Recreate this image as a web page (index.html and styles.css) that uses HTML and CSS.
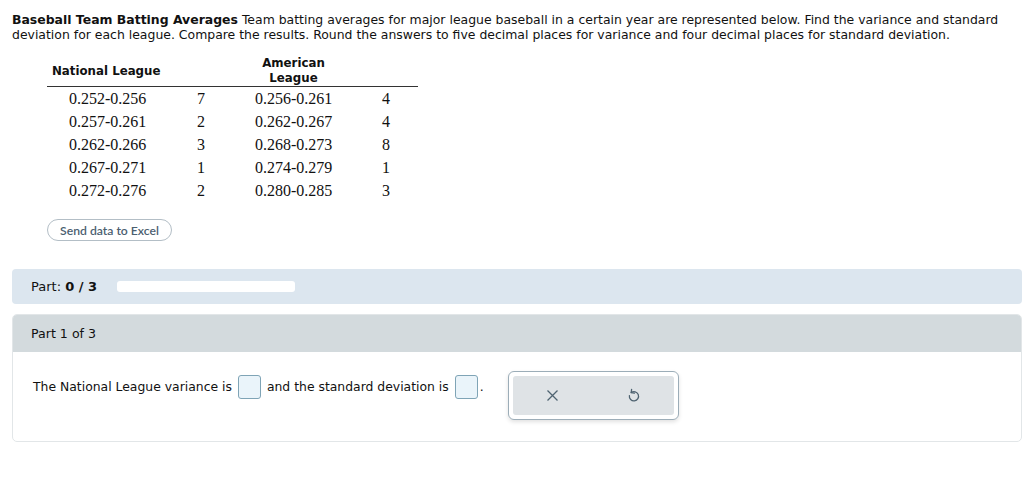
FILE: index.html
```html
<!DOCTYPE html>
<html>
<head>
<meta charset="utf-8">
<link rel="stylesheet" href="styles.css">
</head>
<body>
<div class="page">
  <p class="intro"><b>Baseball Team Batting Averages</b> Team batting averages for major league baseball in a certain year are represented below. Find the variance and standard deviation for each league. Compare the results. Round the answers to five decimal places for variance and four decimal places for standard deviation.</p>

  <div class="data">
    <div class="hdr hdr-nl">National League</div>
    <div class="hdr"></div>
    <div class="hdr hdr-al">American<br>League</div>
    <div class="hdr"></div>
    <div class="hdr"></div>

    <div class="c1">0.252-0.256</div><div class="cn">7</div><div class="c3">0.256-0.261</div><div class="cn">4</div><div></div>
    <div class="c1">0.257-0.261</div><div class="cn">2</div><div class="c3">0.262-0.267</div><div class="cn">4</div><div></div>
    <div class="c1">0.262-0.266</div><div class="cn">3</div><div class="c3">0.268-0.273</div><div class="cn">8</div><div></div>
    <div class="c1">0.267-0.271</div><div class="cn">1</div><div class="c3">0.274-0.279</div><div class="cn">1</div><div></div>
    <div class="c1">0.272-0.276</div><div class="cn">2</div><div class="c3">0.280-0.285</div><div class="cn">3</div><div></div>
  </div>

  <button class="excel">Send data to Excel</button>

  <div class="partbar">
    <span class="partlabel">Part: <b>0 / 3</b></span>
    <span class="progress"></span>
  </div>

  <div class="card">
    <div class="card-head">Part 1 of 3</div>
    <div class="card-body">
      <div class="sentence">The National League variance is <span class="ans"></span> and the standard deviation is <span class="ans"></span>.</div>
      <div class="actions">
        <div class="actions-inner">
          <span class="act">
            <svg width="13" height="13" viewBox="0 0 13 13"><path d="M1.5 1.5 L11.5 11.5 M11.5 1.5 L1.5 11.5" stroke="#4f6371" stroke-width="1.3" fill="none"/></svg>
          </span>
          <span class="act">
            <svg width="13" height="15" viewBox="0 0 13 15"><path d="M4.2 4.6 A4.6 4.6 0 1 1 2.4 7.6" stroke="#4f6371" stroke-width="1.3" fill="none" stroke-linecap="round"/><path d="M4.6 1.4 L4.2 4.6 L7.4 5.2" stroke="#4f6371" stroke-width="1.3" fill="none" stroke-linecap="round" stroke-linejoin="round"/></svg>
          </span>
        </div>
      </div>
    </div>
  </div>
</div>
</body>
</html>
```

FILE: styles.css
```css
html, body {
  margin: 0;
  padding: 0;
  background: #fff;
}
.page {
  padding: 12px 2px 0 12px;
  font-family: "DejaVu Sans", Verdana, sans-serif;
  color: #111;
}
.intro {
  margin: 0;
  font-size: 12.45px;
  line-height: 15px;
  max-width: 998px;
}
.intro b {
  font-weight: bold;
}
.data {
  display: grid;
  grid-template-columns: 134px 40px 145px 40px 12px;
  width: 371px;
  margin: 14px 0 0 35px;
}
.hdr {
  font-weight: bold;
  font-size: 11.8px;
  line-height: 15px;
  border-bottom: 1px solid #333;
  height: 30px;
  display: flex;
  align-items: center;
}
.hdr-nl {
  padding-left: 5px;
}
.hdr-al {
  justify-content: center;
  text-align: center;
}
.c1, .c3, .cn {
  font-family: "Liberation Serif", "Times New Roman", serif;
  font-size: 16px;
  line-height: 23px;
  color: #111;
}
.c1 { padding-left: 22px; }
.c3 { padding-left: 34px; }
.cn { text-align: center; }
.excel {
  display: block;
  margin: 17px 0 0 35px;
  width: 125px;
  height: 22px;
  border: 1px solid #b3bec6;
  border-radius: 11px;
  background: #fff;
  font-family: Lato, "Open Sans", sans-serif;
  font-weight: 600;
  font-size: 12.2px;
  color: #4b6070;
  padding: 0;
}
.partbar {
  margin-top: 28px;
  height: 35px;
  background: #dce6ef;
  border-radius: 4px;
  display: flex;
  align-items: center;
  padding-left: 19px;
}
.partlabel {
  font-size: 13px;
  width: 86px;
}
.progress {
  display: block;
  width: 178px;
  height: 11px;
  background: #fff;
  border-radius: 3px;
}
.card {
  margin-top: 10px;
  border: 1px solid #e2e6e8;
  border-radius: 5px;
  overflow: hidden;
}
.card-head {
  height: 37px;
  background: #d3dadd;
  display: flex;
  align-items: center;
  padding-left: 18px;
  font-size: 12.6px;
}
.card-body {
  display: flex;
  align-items: flex-start;
  padding: 23px 0 21px 20px;
}
.sentence {
  font-size: 12.4px;
  line-height: 24px;
  display: flex;
  align-items: center;
  white-space: nowrap;
}
.ans {
  display: inline-block;
  width: 21px;
  height: 22px;
  border: 1px solid #7fa4b6;
  background: #eaf4fa;
  border-radius: 3px;
  margin: 0 6px;
}
.sentence .ans:last-child {
  margin-right: 2px;
}
.actions {
  margin-left: 24px;
  margin-top: -4px;
  width: 161px;
  height: 39px;
  padding: 4px;
  border: 1px solid #9cadb8;
  border-radius: 6px;
  box-shadow: 0 2px 4px rgba(0,0,0,0.12);
  background: #fff;
}
.actions-inner {
  display: flex;
  height: 100%;
  background: #dfe3e6;
  border-radius: 3px;
}
.act {
  flex: 1;
  display: flex;
  align-items: center;
  justify-content: center;
}
```
